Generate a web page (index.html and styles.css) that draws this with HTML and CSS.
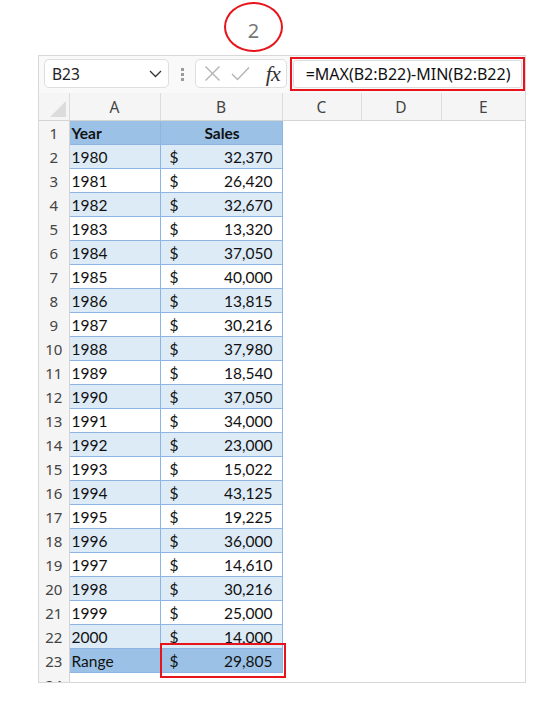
FILE: index.html
```html
<!DOCTYPE html>
<html lang="en">
<head>
    <meta charset="UTF-8">
    <meta name="viewport" content="width=device-width, initial-scale=1.0">
    <title>Sales Range</title>
    <link rel="stylesheet" href="styles.css">
</head>
<body>
    <div class="callout"><span>2</span></div>
    <div class="window">
        <div class="toolbar">
            <div class="namebox">
                <span>B23</span>
                <svg width="13" height="8" viewBox="0 0 13 8"><polyline points="1,1 6.5,6.5 12,1" fill="none" stroke="#333" stroke-width="1.3"/></svg>
            </div>
            <div class="grip"><i></i><i></i><i></i></div>
            <div class="fxbox">
                <svg width="17" height="17" viewBox="0 0 17 17"><path d="M1.5 1.5 L15.5 15.5 M15.5 1.5 L1.5 15.5" stroke="#b3b3b3" stroke-width="1.4" fill="none"/></svg>
                <svg width="19" height="15" viewBox="0 0 19 15"><polyline points="1,8 6.5,13.5 18,1.5" fill="none" stroke="#b3b3b3" stroke-width="1.4"/></svg>
                <span class="fx">fx</span>
            </div>
            <div class="mark">
                <div class="formula">=MAX(B2:B22)-MIN(B2:B22)</div>
            </div>
        </div>
        <div class="sheet">
            <table>
                <colgroup>
                    <col class="c-rn"><col class="c-a"><col class="c-b"><col class="c-c"><col class="c-d"><col>
                </colgroup>
                <thead>
                    <tr>
                        <th class="corner"><span class="tri"></span></th>
                        <th>A</th><th>B</th><th>C</th><th>D</th><th>E</th>
                    </tr>
                </thead>
                <tbody>
                    <tr class="head"><td class="rn">1</td><td class="t">Year</td><td class="t mid">Sales</td><td></td><td></td><td></td></tr>
                    <tr class="band"><td class="rn">2</td><td class="t">1980</td><td class="t"><div class="amt"><span>$</span><span>32,370</span></div></td><td></td><td></td><td></td></tr>
                    <tr><td class="rn">3</td><td class="t">1981</td><td class="t"><div class="amt"><span>$</span><span>26,420</span></div></td><td></td><td></td><td></td></tr>
                    <tr class="band"><td class="rn">4</td><td class="t">1982</td><td class="t"><div class="amt"><span>$</span><span>32,670</span></div></td><td></td><td></td><td></td></tr>
                    <tr><td class="rn">5</td><td class="t">1983</td><td class="t"><div class="amt"><span>$</span><span>13,320</span></div></td><td></td><td></td><td></td></tr>
                    <tr class="band"><td class="rn">6</td><td class="t">1984</td><td class="t"><div class="amt"><span>$</span><span>37,050</span></div></td><td></td><td></td><td></td></tr>
                    <tr><td class="rn">7</td><td class="t">1985</td><td class="t"><div class="amt"><span>$</span><span>40,000</span></div></td><td></td><td></td><td></td></tr>
                    <tr class="band"><td class="rn">8</td><td class="t">1986</td><td class="t"><div class="amt"><span>$</span><span>13,815</span></div></td><td></td><td></td><td></td></tr>
                    <tr><td class="rn">9</td><td class="t">1987</td><td class="t"><div class="amt"><span>$</span><span>30,216</span></div></td><td></td><td></td><td></td></tr>
                    <tr class="band"><td class="rn">10</td><td class="t">1988</td><td class="t"><div class="amt"><span>$</span><span>37,980</span></div></td><td></td><td></td><td></td></tr>
                    <tr><td class="rn">11</td><td class="t">1989</td><td class="t"><div class="amt"><span>$</span><span>18,540</span></div></td><td></td><td></td><td></td></tr>
                    <tr class="band"><td class="rn">12</td><td class="t">1990</td><td class="t"><div class="amt"><span>$</span><span>37,050</span></div></td><td></td><td></td><td></td></tr>
                    <tr><td class="rn">13</td><td class="t">1991</td><td class="t"><div class="amt"><span>$</span><span>34,000</span></div></td><td></td><td></td><td></td></tr>
                    <tr class="band"><td class="rn">14</td><td class="t">1992</td><td class="t"><div class="amt"><span>$</span><span>23,000</span></div></td><td></td><td></td><td></td></tr>
                    <tr><td class="rn">15</td><td class="t">1993</td><td class="t"><div class="amt"><span>$</span><span>15,022</span></div></td><td></td><td></td><td></td></tr>
                    <tr class="band"><td class="rn">16</td><td class="t">1994</td><td class="t"><div class="amt"><span>$</span><span>43,125</span></div></td><td></td><td></td><td></td></tr>
                    <tr><td class="rn">17</td><td class="t">1995</td><td class="t"><div class="amt"><span>$</span><span>19,225</span></div></td><td></td><td></td><td></td></tr>
                    <tr class="band"><td class="rn">18</td><td class="t">1996</td><td class="t"><div class="amt"><span>$</span><span>36,000</span></div></td><td></td><td></td><td></td></tr>
                    <tr><td class="rn">19</td><td class="t">1997</td><td class="t"><div class="amt"><span>$</span><span>14,610</span></div></td><td></td><td></td><td></td></tr>
                    <tr class="band"><td class="rn">20</td><td class="t">1998</td><td class="t"><div class="amt"><span>$</span><span>30,216</span></div></td><td></td><td></td><td></td></tr>
                    <tr><td class="rn">21</td><td class="t">1999</td><td class="t"><div class="amt"><span>$</span><span>25,000</span></div></td><td></td><td></td><td></td></tr>
                    <tr class="band"><td class="rn">22</td><td class="t">2000</td><td class="t"><div class="amt"><span>$</span><span>14,000</span></div></td><td></td><td></td><td></td></tr>
                    <tr class="total"><td class="rn">23</td><td class="t">Range</td><td class="t picked"><div class="amt"><span>$</span><span>29,805</span></div></td><td></td><td></td><td></td></tr>
                    <tr><td class="rn">24</td><td></td><td></td><td></td><td></td><td></td></tr>
                </tbody>
            </table>
        </div>
    </div>
</body>
</html>
```

FILE: styles.css
```css
body {
    margin: 0;
    background: #fff;
    font-family: "Noto Sans", "Open Sans", sans-serif;
    color: #222;
}
.callout {
    width: 55px;
    height: 46px;
    margin: 2px 0 3px 224px;
    border: 2px solid #e8141b;
    border-radius: 50%;
    display: flex;
    align-items: center;
    justify-content: center;
    color: #777;
    font-size: 20px;
}
.callout span {
    margin-top: 6px;
}
.window {
    margin-left: 38px;
    width: 486px;
    border: 1px solid #d8d8d8;
    background: #f9f9f9;
}
.toolbar {
    height: 37px;
    display: flex;
    align-items: flex-start;
    padding: 3px 0 0 5px;
    box-sizing: border-box;
}
.namebox {
    width: 126px;
    height: 29px;
    box-sizing: border-box;
    border: 1px solid #dedede;
    border-radius: 5px;
    background: #fff;
    display: flex;
    align-items: center;
    justify-content: space-between;
    padding: 0 6px 0 7px;
    font-size: 15.5px;
}
.grip {
    width: 3px;
    margin: 9px 0 0 12px;
    display: flex;
    flex-direction: column;
    gap: 2px;
}
.grip i {
    width: 3px;
    height: 3px;
    background: #9a9a9a;
}
.fxbox {
    width: 92px;
    height: 29px;
    margin-left: 11px;
    box-sizing: border-box;
    border: 1px solid #dedede;
    border-radius: 5px;
    background: #fff;
    display: flex;
    align-items: center;
    padding: 0 6px 0 8px;
    gap: 10px;
}
.fx {
    margin-left: auto;
    font-family: "Liberation Serif", serif;
    font-style: italic;
    font-size: 22px;
    color: #333;
    letter-spacing: -1px;
}
.mark {
    margin: -2px 0 0 3px;
    width: 237px;
    height: 34px;
    box-sizing: border-box;
    border: 2px solid #e8141b;
    padding: 1px;
}
.formula {
    height: 28px;
    box-sizing: border-box;
    border: 1px solid #dedede;
    border-radius: 3px;
    background: #fff;
    padding-left: 12px;
    font-size: 16px;
    line-height: 26px;
    color: #111;
}
.sheet {
    height: 589px;
    overflow: hidden;
    background: #fff;
}
table {
    border-collapse: collapse;
    table-layout: fixed;
    width: 100%;
}
.c-rn { width: 30px; }
.c-a { width: 91px; }
.c-b { width: 122px; }
.c-c { width: 79px; }
.c-d { width: 80px; }
th {
    height: 27px;
    padding: 0;
    background: #f5f5f5;
    border-right: 1px solid #dcdcdc;
    border-bottom: 1px solid #d4d4d4;
    font-weight: normal;
    font-size: 15.5px;
    color: #444;
}
th:last-child {
    border-right: none;
}
.corner {
    position: relative;
}
.tri {
    position: absolute;
    right: 3px;
    bottom: 3px;
    width: 0;
    height: 0;
    border-left: 16px solid transparent;
    border-bottom: 16px solid #dcdcdc;
}
td {
    height: 24px;
    padding: 0;
    box-sizing: border-box;
    font-family: Lato, "Liberation Sans", sans-serif;
    font-size: 15.5px;
    color: #111;
}
td.rn {
    background: #f5f5f5;
    border-right: 1px solid #d4d4d4;
    text-align: center;
    font-family: "Noto Sans", sans-serif;
    font-size: 15px;
    color: #444;
}
td.t {
    border: 1px solid #8db4e2;
    padding-left: 2px;
}
tr.band td.t {
    background: #ddebf7;
}
tr.head td.t,
tr.total td.t {
    background: #9bc2e6;
}
tr.head td.t {
    font-weight: bold;
}
td.mid {
    text-align: center;
}
.amt {
    display: flex;
    justify-content: space-between;
    padding: 0 9px 0 7px;
}
.picked {
    position: relative;
}
.picked::after {
    content: "";
    position: absolute;
    top: -6px;
    left: -1px;
    right: -4px;
    bottom: -6px;
    border: 2px solid #e8141b;
}
```
